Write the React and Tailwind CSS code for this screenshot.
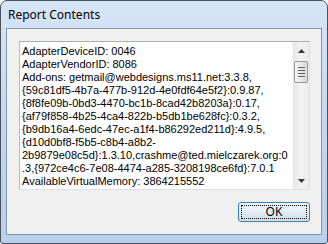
const lines = [
  "AdapterDeviceID: 0046",
  "AdapterVendorID: 8086",
  "Add-ons: getmail@webdesigns.ms11.net:3.3.8,",
  "{59c81df5-4b7a-477b-912d-4e0fdf64e5f2}:0.9.87,",
  "{8f8fe09b-0bd3-4470-bc1b-8cad42b8203a}:0.17,",
  "{af79f858-4b25-4ca4-822b-b5db1be628fc}:0.3.2,",
  "{b9db16a4-6edc-47ec-a1f4-b86292ed211d}:4.9.5,",
  "{d10d0bf8-f5b5-c8b4-a8b2-",
  "2b9879e08c5d}:1.3.10,crashme@ted.mielczarek.org:0",
  ".3,{972ce4c6-7e08-4474-a285-3208198ce6fd}:7.0.1",
  "AvailableVirtualMemory: 3864215552",
];

function ScrollBar() {
  return (
    <div className="w-[17px] flex flex-col bg-gradient-to-r from-[#e6e6e6] via-[#f2f2f2] to-[#ebebeb] border-l border-[#f7f7f7]">
      <div className="h-[17px] flex items-center justify-center">
        <svg width="7" height="4" viewBox="0 0 7 4">
          <path d="M0 4 L3.5 0 L7 4 Z" fill="#3a3a3a" />
        </svg>
      </div>
      <div className="h-[2px]" />
      <div className="mx-[1px] h-[22px] rounded-[2px] border border-[#9a9a9a] bg-gradient-to-r from-[#f4f4f4] via-[#e9e9e9] to-[#d8d8d8] flex flex-col items-center justify-center gap-[2px]">
        <div className="w-[7px] h-[1px] bg-[#5f5f5f]" />
        <div className="w-[7px] h-[1px] bg-[#5f5f5f]" />
        <div className="w-[7px] h-[1px] bg-[#5f5f5f]" />
        <div className="w-[7px] h-[1px] bg-[#5f5f5f]" />
      </div>
      <div className="flex-1" />
      <div className="h-[17px] flex items-center justify-center">
        <svg width="7" height="4" viewBox="0 0 7 4">
          <path d="M0 0 L3.5 4 L7 0 Z" fill="#3a3a3a" />
        </svg>
      </div>
    </div>
  );
}

export default function App() {
  return (
    <div className="w-[328px] h-[244px] bg-white">
      <div className="w-full h-full flex flex-col rounded-t-[7px] rounded-b-[3px] border border-[#4a5260] bg-gradient-to-b from-[#d6e5f6] via-[#c3d8ef] to-[#b8d0ea]">
        <div
          className="h-[27px] flex items-center pl-[7px] pt-[1px] text-[12px] text-black"
          style={{ fontFamily: '"Noto Sans", "Open Sans", sans-serif' }}
        >
          Report Contents
        </div>
        <div className="mx-[5px] mb-[8px] flex-1 border border-[#8197ae] bg-[#f0f0f0] flex flex-col p-[12px] pr-[11px] gap-[12px]">
          <div className="h-[149px] flex bg-white border border-t-[#abadb3] border-l-[#b9bcc3] border-r-[#dcdfe5] border-b-[#dcdfe5]">
            <div
              className="flex-1 pl-[2px] pt-[3px] text-[11px] leading-[13px] text-black overflow-hidden"
              style={{ fontFamily: '"Liberation Sans", Arial, sans-serif' }}
            >
              {lines.map((l, i) => (
                <div key={i} className="whitespace-nowrap">{l}</div>
              ))}
            </div>
            <ScrollBar />
          </div>
          <div className="flex justify-end">
            <button
              className="w-[72px] h-[20px] rounded-[3px] border border-[#3c7fb1] bg-gradient-to-b from-[#eef5fb] via-[#e3ecf4] to-[#d3dee8] p-[2px]"
              style={{ fontFamily: '"Noto Sans", "Open Sans", sans-serif' }}
            >
              <div className="w-full h-full border border-dotted border-black flex items-center justify-center text-[12px] text-black leading-none">
                OK
              </div>
            </button>
          </div>
        </div>
      </div>
    </div>
  );
}
